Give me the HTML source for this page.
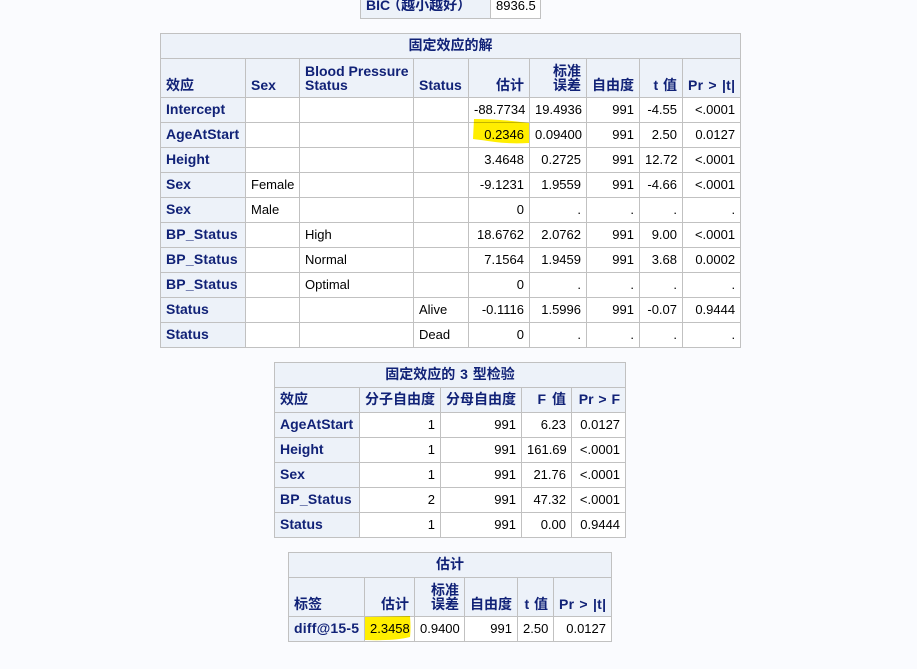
<!DOCTYPE html>
<html lang="zh"><head><meta charset="utf-8"><style>
html,body{margin:0;padding:0;width:917px;height:669px;overflow:hidden;background:#fafbfe}
body{position:relative;font-family:"Liberation Sans","Noto Sans CJK SC",sans-serif;font-size:13px;color:#000}
table{position:absolute;border-collapse:collapse;table-layout:fixed;background:#fff}
th,td{border:1px solid #c1c1c1;padding:0 5px;height:24px;box-sizing:border-box;white-space:nowrap;overflow:hidden;line-height:14px}
th{background:#edf2f9;color:#112277;font-weight:bold;font-size:14px;text-align:left;vertical-align:bottom;padding-bottom:5px;word-spacing:1px}
th.h{vertical-align:middle;padding-bottom:2px}
th.c{text-align:center;vertical-align:middle;padding-bottom:2px}
th.r,td{text-align:right}
th.w{letter-spacing:.2px}
th.p{letter-spacing:.25px}
td.l{text-align:left}
tbody th{vertical-align:middle;padding-bottom:2px}
tr{height:25px}
svg{position:absolute;left:0;top:0;mix-blend-mode:multiply}
</style></head><body>

<table style="left:360px;top:-7px;width:180px">
<colgroup><col style="width:130px"><col style="width:50px"></colgroup>
<tr><th class="h">BIC<span style="margin-left:-3px">（</span>越小越好）</th><td class="l">8936.5</td></tr>
</table>

<table style="left:160px;top:33px;width:580px">
<colgroup><col style="width:85px"><col style="width:54px"><col style="width:114px"><col style="width:55px"><col style="width:61px"><col style="width:57px"><col style="width:53px"><col style="width:43px"><col style="width:58px"></colgroup>
<thead>
<tr><th class="c" colspan="9">固定效应的解</th></tr>
<tr style="height:39px"><th>效应</th><th>Sex</th><th style="word-spacing:0">Blood Pressure<br>Status</th><th>Status</th><th class="r">估计</th><th class="r">标准<br>误差</th><th class="r">自由度</th><th class="r">t 值</th><th class="r p">Pr &gt; |t|</th></tr>
</thead>
<tbody>
<tr><th>Intercept</th><td></td><td></td><td></td><td>-88.7734</td><td>19.4936</td><td>991</td><td>-4.55</td><td>&lt;.0001</td></tr>
<tr><th>AgeAtStart</th><td></td><td></td><td></td><td>0.2346</td><td>0.09400</td><td>991</td><td>2.50</td><td>0.0127</td></tr>
<tr><th>Height</th><td></td><td></td><td></td><td>3.4648</td><td>0.2725</td><td>991</td><td>12.72</td><td>&lt;.0001</td></tr>
<tr><th>Sex</th><td class="l">Female</td><td></td><td></td><td>-9.1231</td><td>1.9559</td><td>991</td><td>-4.66</td><td>&lt;.0001</td></tr>
<tr><th>Sex</th><td class="l">Male</td><td></td><td></td><td>0</td><td>.</td><td>.</td><td>.</td><td>.</td></tr>
<tr><th class="w">BP_Status</th><td></td><td class="l">High</td><td></td><td>18.6762</td><td>2.0762</td><td>991</td><td>9.00</td><td>&lt;.0001</td></tr>
<tr><th class="w">BP_Status</th><td></td><td class="l">Normal</td><td></td><td>7.1564</td><td>1.9459</td><td>991</td><td>3.68</td><td>0.0002</td></tr>
<tr><th class="w">BP_Status</th><td></td><td class="l">Optimal</td><td></td><td>0</td><td>.</td><td>.</td><td>.</td><td>.</td></tr>
<tr><th>Status</th><td></td><td></td><td class="l">Alive</td><td>-0.1116</td><td>1.5996</td><td>991</td><td>-0.07</td><td>0.9444</td></tr>
<tr><th>Status</th><td></td><td></td><td class="l">Dead</td><td>0</td><td>.</td><td>.</td><td>.</td><td>.</td></tr>
</tbody>
</table>

<table style="left:274px;top:362px;width:351px">
<colgroup><col style="width:85px"><col style="width:81px"><col style="width:81px"><col style="width:50px"><col style="width:54px"></colgroup>
<thead>
<tr><th class="c" colspan="5">固定效应的 3 型检验</th></tr>
<tr><th class="h">效应</th><th class="h r">分子自由度</th><th class="h r">分母自由度</th><th class="h r" style="word-spacing:2px">F 值</th><th class="h r">Pr &gt; F</th></tr>
</thead>
<tbody>
<tr><th>AgeAtStart</th><td>1</td><td>991</td><td>6.23</td><td>0.0127</td></tr>
<tr><th>Height</th><td>1</td><td>991</td><td>161.69</td><td>&lt;.0001</td></tr>
<tr><th>Sex</th><td>1</td><td>991</td><td>21.76</td><td>&lt;.0001</td></tr>
<tr><th class="w">BP_Status</th><td>2</td><td>991</td><td>47.32</td><td>&lt;.0001</td></tr>
<tr><th>Status</th><td>1</td><td>991</td><td>0.00</td><td>0.9444</td></tr>
</tbody>
</table>

<table style="left:288px;top:552px;width:323px">
<colgroup><col style="width:76px"><col style="width:50px"><col style="width:50px"><col style="width:53px"><col style="width:36px"><col style="width:58px"></colgroup>
<thead>
<tr><th class="c" colspan="6">估计</th></tr>
<tr style="height:39px"><th>标签</th><th class="r">估计</th><th class="r">标准<br>误差</th><th class="r">自由度</th><th class="r">t 值</th><th class="r p">Pr &gt; |t|</th></tr>
</thead>
<tbody>
<tr><th class="w">diff@15-5</th><td>2.3458</td><td>0.9400</td><td>991</td><td>2.50</td><td>0.0127</td></tr>
</tbody>
</table>

<svg width="917" height="669" viewBox="0 0 917 669">
<path d="M474 119 Q500 119 529 123 L529 143 Q510 144 495 142 Q482 140 473 139 Z" fill="#ffee00"/>
<path d="M365 617 L410 616 Q411 628 410 637 Q395 641 365 640 Z" fill="#ffee00"/>
</svg>
</body></html>
